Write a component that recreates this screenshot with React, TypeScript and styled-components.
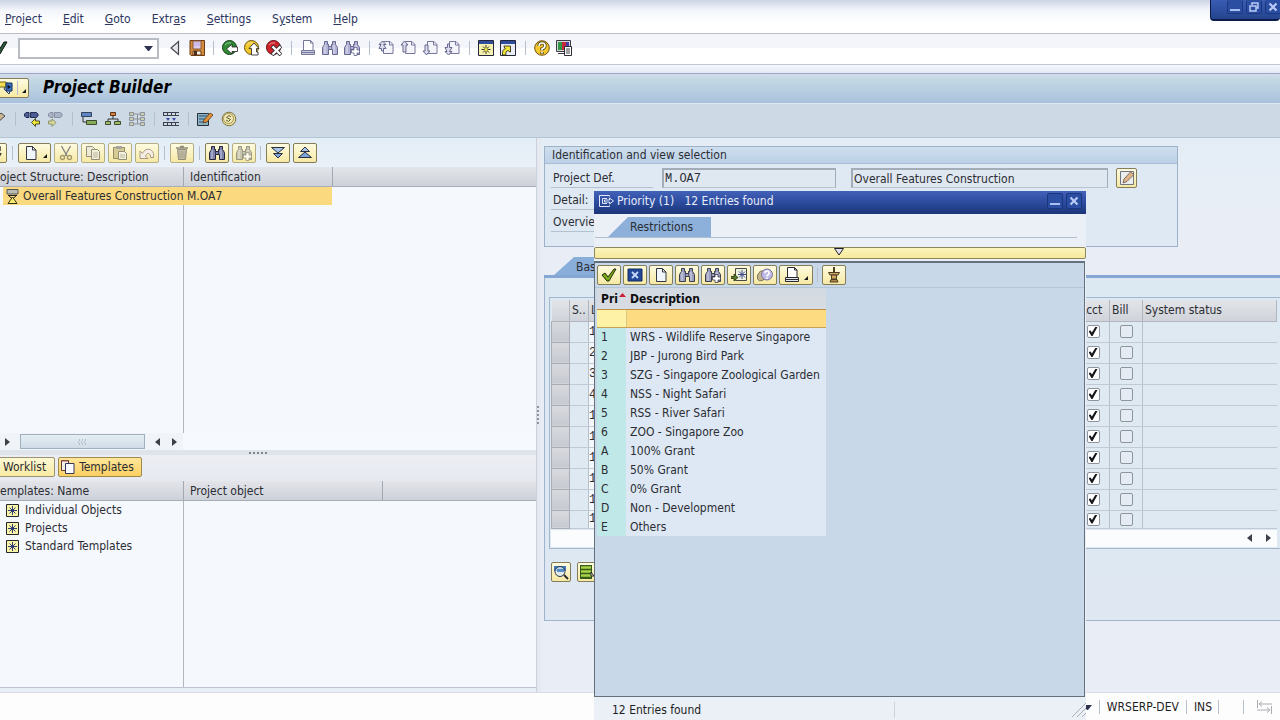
import React from 'react';
import styled, { createGlobalStyle, css } from 'styled-components';

const FONT = '"DejaVu Sans Condensed", "DejaVu Sans", "Noto Sans", sans-serif';

const Global = createGlobalStyle`
  *, *::before, *::after { box-sizing: border-box; }
  body {
    margin: 0;
    font: 12px/16px ${FONT};
    color: #2b2d33;
    background: #e9eef6;
    overflow: hidden;
  }
  button, input { font: inherit; color: inherit; margin: 0; }
  svg { flex: none; }
`;

/* ---------- frame ---------- */

const Window = styled.div`
  position: relative;
  display: flex;
  flex-direction: column;
  min-height: 100vh;
  overflow: hidden;
`;

const MenuBar = styled.nav`
  display: flex;
  justify-content: space-between;
  height: 34px;
  border-bottom: 1px solid #bcbcc2;
  background: linear-gradient(#ccd4e5, #f2f5fa 10px, #ffffff 22px);
`;

const MenuList = styled.ul`
  display: flex;
  gap: 21px;
  margin: 0;
  padding: 11px 0 0 5px;
  list-style: none;
`;

const MenuItem = styled.button`
  padding: 0;
  border: 0;
  background: none;
  color: #2c3560;
  line-height: 16px;
`;

const CornerControls = styled.div`
  display: flex;
  gap: 3px;
  width: 70px;
  height: 21px;
  padding: 0 0 0 16px;
  border-bottom: 2px solid #0c1c48;
  border-left: 1px solid #0c1c48;
  border-radius: 0 0 4px 4px;
  background: linear-gradient(#3a5cb2, #24448f);
  overflow: hidden;
`;

const WindowButton = styled.button<{ $boxed?: boolean }>`
  display: flex;
  flex: none;
  align-items: center;
  justify-content: center;
  width: 16px;
  height: ${(p) => (p.$boxed ? 16 : 14)}px;
  padding: 0;
  border: 1px solid #1a367e;
  border-top-color: ${(p) => (p.$boxed ? '#1a367e' : 'transparent')};
  border-radius: 2px;
  background: #2b4da2;
`;

const StandardBar = styled.div`
  height: 31px;
  padding-bottom: 2px;
  border-bottom: 1px solid #c3c7d4;
  background: linear-gradient(#f4f5fb 14px, #ffffff 14px);
`;

const BarGap = styled.div`
  height: 9px;
  border-bottom: 1px solid #9ea7c1;
  background: linear-gradient(#f6f8fd, #e3e9f5);
`;

const TitleBar = styled.header`
  display: flex;
  align-items: center;
  gap: 14px;
  height: 30px;
  padding-bottom: 1px;
  border-bottom: 1px solid #dde7f1;
  background: linear-gradient(#d3dcec, #c4d8e3 6px, #a9c1dd);
`;

const Title = styled.h1`
  margin: 0;
  padding-bottom: 2px;
  font: italic bold 17px/20px ${FONT};
  color: #000;
`;

const AppBar = styled.div`
  height: 34px;
  padding-bottom: 3px;
  border-bottom: 1px solid #b3c4d4;
  background: #cddae6;
`;

const Tools = styled.div<{ $gap: number; $cut?: number }>`
  display: flex;
  align-items: center;
  gap: ${(p) => p.$gap}px;
  height: 100%;
  margin-left: -${(p) => p.$cut ?? 0}px;
`;

const Divider = styled.span<{ $before?: number; $after?: number }>`
  flex: none;
  width: 1px;
  height: 14px;
  margin: 0 ${(p) => p.$after ?? 1}px 0 ${(p) => p.$before ?? 1}px;
  background: #b5bfce;
`;

const FlatButton = styled.button`
  display: flex;
  flex: none;
  width: 16px;
  height: 16px;
  padding: 0;
  border: 0;
  background: none;
`;

const GoldButton = styled.button<{ $w?: number; $faded?: boolean }>`
  display: flex;
  flex: none;
  align-items: center;
  justify-content: center;
  gap: 4px;
  width: ${(p) => (p.$w ? `${p.$w}px` : '24px')};
  height: 20px;
  padding: 0;
  border: 1px solid ${(p) => (p.$faded ? '#b5ad84' : '#857d58')};
  border-radius: 2px;
  background: linear-gradient(#fefbe0, #f6e9a4);
  svg { opacity: ${(p) => (p.$faded ? 0.75 : 1)}; }
`;

const CommandBox = styled.div`
  display: flex;
  align-items: center;
  width: 141px;
  height: 21px;
  margin: 0 2px 0 4px;
  border: 2px solid #b9bbc2;
  background: #fff;
`;

const CommandInput = styled.input`
  flex: 1;
  min-width: 0;
  height: 17px;
  border: 0;
  background: transparent;
`;

/* ---------- panes ---------- */

const Panes = styled.main`
  display: grid;
  grid-template-columns: 537px 4px minmax(0, 1fr);
  flex: 1;
`;

const LeftPane = styled.section`
  display: flex;
  flex-direction: column;
  min-width: 0;
  padding-bottom: 4px;
  overflow: hidden;
  border-right: 1px solid #c9d1dc;
  background: #e8eef6;
`;

const Splitter = styled.div`
  display: flex;
  align-items: center;
  justify-content: flex-start;
  background: #e6e9f0;
`;

const PaneTools = styled.div`
  height: 29px;
  background: linear-gradient(#e3eef6, #eaf0f8);
`;

const TreeHead = styled.div<{ $second: number }>`
  display: grid;
  grid-template-columns: 184px ${(p) => p.$second}px 1fr;
  flex: none;
  height: 20px;
  border-bottom: 1px solid #a9adb8;
  background: linear-gradient(#e3e5ea, #cdd1d9);
`;

const HeadCell = styled.div<{ $flush?: boolean }>`
  padding: 2px 0 0 ${(p) => (p.$flush ? 0 : 6)}px;
  border-right: 1px solid #a4a8b2;
  line-height: 17px;
  white-space: nowrap;
  &:last-child { border-right: 0; }
`;

const TreeBody = styled.div<{ $grow?: boolean }>`
  flex: ${(p) => (p.$grow ? '1' : '0 0 246px')};
  border-bottom: ${(p) => (p.$grow ? '1px solid #bcc4d0' : '0')};
  background: linear-gradient(#b1b6c0, #b1b6c0) 183px 0 / 1px 100% no-repeat #f5f8fd;
`;

const ProjectRow = styled.div`
  display: grid;
  grid-template-columns: 180px 149px;
  width: 329px;
  height: 18px;
  margin-left: 3px;
  background: #fad97f;
`;

const RowCell = styled.div<{ $first?: boolean }>`
  display: flex;
  align-items: center;
  gap: 4px;
  padding-left: ${(p) => (p.$first ? 3 : 4)}px;
  white-space: nowrap;
`;

const TemplateRow = styled.div`
  display: flex;
  align-items: center;
  gap: 6px;
  height: 18px;
  padding-left: 6px;
`;

const ScrollRow = styled.div`
  display: flex;
  flex: none;
  align-items: center;
  gap: 8px;
  width: 183px;
  height: 17px;
  padding-left: 3px;
  background: #f0f4f9;
`;

const ScrollStrip = styled.div`
  flex: none;
  background: #f6f9fd;
`;

const Thumb = styled.div`
  display: flex;
  align-items: center;
  justify-content: center;
  width: 125px;
  height: 15px;
  border: 1px solid #9fb0c0;
  background: linear-gradient(#e6eef4, #cfdce7);
`;

const ArrowButton = styled.button<{ $w?: number }>`
  display: flex;
  align-items: center;
  justify-content: center;
  width: ${(p) => p.$w ?? 9}px;
  height: 15px;
  padding: 0;
  border: 0;
  background: none;
`;

const HorizontalSplitter = styled.div`
  display: flex;
  flex: none;
  align-items: center;
  height: 5px;
  padding-left: 249px;
  background: #dfe3ea;
`;

const ModeBar = styled.div`
  display: flex;
  flex: none;
  align-items: center;
  gap: 3px;
  height: 26px;
  margin-left: -9px;
  padding-bottom: 2px;
  background: linear-gradient(#eceef4, #e6e9f0);
`;

const ModeButton = styled.button<{ $active?: boolean }>`
  display: flex;
  align-items: center;
  gap: 4px;
  height: 20px;
  padding: 0 ${(p) => (p.$active ? 7 : 8)}px 0 ${(p) => (p.$active ? 2 : 11)}px;
  border: 1px solid ${(p) => (p.$active ? '#a08a4a' : '#9a9270')};
  border-radius: 2px;
  background: ${(p) => (p.$active ? 'linear-gradient(#ffe79a, #fbcf62)' : 'linear-gradient(#fdf9d4, #f8eaa2)')};
`;

/* ---------- right pane ---------- */

const RightPane = styled.section`
  min-width: 0;
  padding: 8px 0 0 3px;
  background: linear-gradient(#e4edf6, #e9eef6 80px);
`;

const Group = styled.section`
  max-width: 634px;
  height: 101px;
  border: 1px solid #9db1c9;
  background: #dfe9f3;
`;

const GroupTitle = styled.h2`
  margin: 0 0 3px;
  padding-left: 7px;
  border-bottom: 1px solid #a8bdd6;
  background: linear-gradient(#cfdeed, #bcd1e7);
  font: 12px/16px ${FONT};
`;

const FieldRow = styled.div`
  display: flex;
  align-items: center;
  height: 22px;
  padding-left: 6px;
`;

const FieldLabel = styled.label`
  width: 102px;
  height: 20px;
  margin-right: 9px;
  padding-left: 2px;
  border-bottom: 1px solid #b3c1d0;
  line-height: 20px;
`;

const Field = styled.input<{ $w: number; $mono?: boolean }>`
  width: ${(p) => p.$w}px;
  height: 20px;
  margin-right: ${(p) => (p.$mono ? 15 : 8)}px;
  padding: 0 1px;
  border: 2px solid #a3adb8;
  border-right-width: 1px;
  border-bottom: 1px solid #b8c2cc;
  background: #dfe8f1;
  ${(p) => p.$mono && css`font: 12px/16px "Liberation Mono", monospace;`}
`;

const SlantTab = styled.button<{ $color: string }>`
  display: block;
  height: 100%;
  padding: 0 18px 0 22px;
  border: 0;
  clip-path: polygon(20px 0, 100% 0, 100% 100%, 0 100%);
  background: ${(p) => p.$color};
  line-height: 20px;
`;

const TabStrip = styled.div`
  height: 21px;
  margin-top: 10px;
  padding-left: 10px;
  border-bottom: 3px solid #86a7d3;
`;

const Panel = styled.div`
  height: 343px;
  padding: 19px 0 0 4px;
  border: 1px solid #9fb3cc;
  border-width: 0 0 1px 1px;
  background: linear-gradient(#dce9f3, #dfe8f2);
`;

const GridFrame = styled.div`
  height: 252px;
  padding: 2px 3px 0 1px;
  border: 1px solid #a5b7cc;
  border-width: 1px 0 1px 1px;
`;

const ActivityTable = styled.table`
  width: 100%;
  table-layout: fixed;
  border-collapse: collapse;
  th {
    height: 21px;
    padding: 0 2px;
    border-right: 1px solid #b0b5be;
    border-bottom: 1px solid #b0b5be;
    background: linear-gradient(#e2e4e8, #cfd3d9);
    font-weight: normal;
    text-align: left;
    white-space: nowrap;
  }
  td {
    height: 21px;
    padding: 0;
    border-right: 1px solid #b6c0cc;
    border-bottom: 1px solid #c0c9d4;
    background: #dfe9f2;
    font: 12px/16px "Liberation Mono", monospace;
  }
  td:last-child { border-right: 0; }
  tbody tr:last-child td { height: 18px; }
`;

const SelectorCell = styled.td`
  && {
    border: 1px solid #a9adb5;
    background: linear-gradient(#d8dadf, #c6c9d0);
  }
`;

const NumberCell = styled.td`
  && { background: #f4f7fb; }
`;

const Tick = styled.input`
  display: block;
  appearance: none;
  width: 13px;
  height: 13px;
  margin: 0 auto;
  border: 1px solid #8d949e;
  border-radius: 2px;
  background: #e4ebf2;
  &:checked { background: #fff; }
  &:checked::after {
    content: '';
    display: block;
    width: 9px;
    height: 9px;
    margin: 1px;
    background: #15171c;
    clip-path: polygon(0 45%, 22% 38%, 38% 62%, 75% 0, 100% 0, 45% 100%, 32% 100%);
  }
`;

const GridScroll = styled.div`
  display: flex;
  align-items: center;
  justify-content: flex-end;
  gap: 2px;
  height: 17px;
  margin-top: 1px;
  background: #fbfcfe;
`;

const PanelButtons = styled.div`
  display: flex;
  gap: 6px;
  padding: 13px 0 0 2px;
`;

const StatusBar = styled.footer`
  display: flex;
  align-items: center;
  justify-content: flex-end;
  gap: 6px;
  height: 28px;
  padding: 1px 7px 0 0;
  border-top: 1px solid #d9dde5;
  background: #fdfdfe;
  color: #1d1e22;
`;

/* ---------- search help window ---------- */

const Dialog = styled.section`
  position: absolute;
  top: 191px;
  bottom: 0;
  left: 594px;
  display: flex;
  flex-direction: column;
  width: 492px;
  background: #ebf0f7;
`;

const DialogTitle = styled.header`
  display: flex;
  align-items: center;
  gap: 3px;
  height: 23px;
  padding: 0 4px 3px 5px;
  background: linear-gradient(#4261b8, #2c4b9e 50%, #1b3578);
  color: #e6ecfa;
`;

const DialogName = styled.h2`
  flex: 1;
  margin: 0;
  font: 12px/16px ${FONT};
  white-space: pre;
`;

const DialogTabs = styled.div`
  height: 24px;
  margin: 0 9px 0 1px;
  padding: 3px 0 0 13px;
  border-bottom: 1px solid #b1bfd2;
`;

const GoldStrip = styled.button`
  display: flex;
  height: 12px;
  margin-top: 9px;
  padding: 0 0 0 239px;
  border: 1px solid #8c875f;
  border-radius: 2px;
  background: linear-gradient(#fcf5bc, #f7e89a);
`;

const DialogBody = styled.div`
  flex: 1;
  margin: 2px 1px 0 0;
  border: 1px solid #65707d;
  border-top-width: 2px;
  background: #c9d8e8;
`;

const DialogTools = styled.div`
  height: 25px;
  padding-left: 2px;
  border-bottom: 1px solid #b4c5d8;
`;

const HitList = styled.table`
  width: 229px;
  margin-left: 2px;
  table-layout: fixed;
  border-collapse: collapse;
  th {
    height: 21px;
    padding: 1px 0 0 4px;
    border-bottom: 1px solid #c08d45;
    background: linear-gradient(#d3dae2, #d8dce2);
    color: #0d0e10;
    text-align: left;
  }
  td {
    height: 19px;
    padding: 0 0 0 4px;
    background: #dde8f4;
    line-height: 18px;
    white-space: nowrap;
  }
  td:first-child { background: #c0e8e8; }
`;

const BlankRow = styled.tr`
  && td { background: #fddb80; height: 18px; border-bottom: 1px solid #c9a055; }
  && td:first-child { background: #fdf2a6; border-right: 1px solid #d9c987; }
`;

const SortHead = styled.th`
  svg { margin: 0 0 6px 1px; }
`;

const DialogStatus = styled.footer`
  display: flex;
  align-items: center;
  height: 23px;
  padding: 3px 0 0 18px;
  color: #1d1e22;
`;

const StatusDivider = styled.span`
  width: 1px;
  height: 16px;
  margin: 0 auto 0 193px;
  background: #cdd4de;
`;

/* ---------- icons ---------- */

const Svg = ({ w = 16, h = 16, children }: { w?: number; h?: number; children: React.ReactNode }) => (
  <svg width={w} height={h} viewBox={`0 0 ${w} ${h}`} fill="none" aria-hidden="true">{children}</svg>
);

const Check = () => (
  <Svg><path d="M1 8l3-2 3 4 6-8h2l-7 12H6z" fill="#7aa818" stroke="#222b0c" /></Svg>
);
const DarkCheck = () => (
  <Svg><path d="M1 8l3-2 3 4 5-8h3l-7 12H6z" fill="#2d5a3c" stroke="#10150f" /></Svg>
);
const Down = ({ color = '#2e3250' }) => (
  <Svg w={9} h={5}><path d="M0 0h9L5 5H4z" fill={color} /></Svg>
);
const TriLeft = () => (
  <Svg><path d="M11.500 1.500v13L4 8z" fill="#e5e7ea" stroke="#45474d" strokeWidth="1.200" /></Svg>
);
const ArrowLeft = () => (<Svg w={5} h={8}><path d="M5 0v8L0 4z" fill="#3d4048" /></Svg>);
const ArrowRight = () => (<Svg w={5} h={8}><path d="M0 0v8l5-4z" fill="#3d4048" /></Svg>);
const Save = () => (
  <Svg>
    <path d="M1 .5h14.500v15H2l-1-1z" fill="#d48a3c" stroke="#6b3c14" />
    <path d="M4 1h8v8H4z" fill="#dccdf0" stroke="#8a5a34" /><path d="M5 3h6M5 5h6" stroke="#c0a8e0" />
    <path d="M4 11h8v4H4z" fill="#f5f0e4" stroke="#6b3c14" /><path d="M5 11h3v4H5z" fill="#4a2c18" />
  </Svg>
);
const Round = ({ color, edge, children }: { color: string; edge: string; children: React.ReactNode }) => (
  <Svg><circle cx="7.500" cy="7.500" r="7" fill={color} stroke={edge} /><path d="M3 5q2-3 6-2" stroke="#fff" opacity=".5" />{children}</Svg>
);
const Back = () => (
  <Round color="#2f8a34" edge="#173c18"><path d="M4.500 9L10 4v3h5.500v4.500H10V14z" fill="#fff" stroke="#222" strokeWidth=".8" /></Round>
);
const Exit = () => (
  <Round color="#f0c82c" edge="#6d5410"><path d="M10 3l5 5.500h-2.500V12H14v3H7.500V8.500H5z" fill="#fff" stroke="#333" strokeWidth=".9" /></Round>
);
const Cancel = () => (
  <Round color="#d0242a" edge="#5c1013">
    <path d="M6 6l9 9M15 6l-9 9" stroke="#333" strokeWidth="4" /><path d="M6.500 6.500l8 8M14.500 6.500l-8 8" stroke="#fff" strokeWidth="2.400" />
  </Round>
);
const Printer = ({ edge = '#77779a', body = '#c9c9e2' }) => (
  <Svg>
    <path d="M3.500 10.500v-10h7l2.500 2.500v7.500z" fill="#fff" stroke={edge} /><path d="M10.500.5V3H13" stroke={edge} />
    <path d="M1.500 10.500h13v4h-13z" fill={body} stroke={edge} /><path d="M1 12.500h14" stroke={edge} />
  </Svg>
);
const Binoculars = ({ edge = '#66688f', fill = '#b4b5d6', plus = false, star = '#fff' }) => (
  <Svg>
    <path d="M2.500 1.500h3v3h1v2h3v-2h1v-3h3v3l2 3v7h-5v-5h-4v5h-6v-7l2-3z" fill={fill} stroke={edge} />
    <path d="M3 5v9M12 5v9" stroke="#fff" opacity=".6" /><path d="M6.500 4v6M9.500 4v6" stroke={edge} opacity=".7" />
    {plus && <path d="M10 7.500h3v2.500h2.500v3H13v2.500h-3V13H7.500v-3H10z" fill={star} stroke={edge} strokeWidth=".8" />}
  </Svg>
);
const PageNav = ({ kind }: { kind: 'first' | 'prev' | 'next' | 'last' }) => (
  <Svg>
    <path d="M5.500 1.500h6.500l3 3v9H5.500z" fill="#f4f4fb" stroke="#77779a" /><path d="M11.500 1.500v3.500H15" stroke="#77779a" />
    {kind === 'first' && <path d="M4.500 1L1 4.500h2L1 8.500h2.500V11h2V8.500H8L5.500 4.500H8z" fill="#dddcec" stroke="#66688f" />}
    {kind === 'prev' && <path d="M4.500 1L1 5h2v7h3V5h2z" fill="#dddcec" stroke="#66688f" />}
    {kind === 'next' && <path d="M4.500 15L1 11h2V5h3v6h2z" fill="#dddcec" stroke="#66688f" />}
    {kind === 'last' && <path d="M4.500 15L1 11.500h2L1 7.500h2.500V4h2v3.500H8L5.500 11.500H8z" fill="#dddcec" stroke="#66688f" />}
  </Svg>
);
const NewSession = () => (
  <Svg>
    <path d="M.5.5h15v15H.5z" fill="#f6f1b0" stroke="#23253a" /><path d="M1 1h14v3H1z" fill="#2f4d9c" />
    <path d="M8 5v9M3.500 9.500h9M5 6.500l6 6M11 6.500l-6 6" stroke="#34351a" /><circle cx="8" cy="9.500" r="1.500" fill="#f7ee3c" />
  </Svg>
);
const Shortcut = () => (
  <Svg>
    <path d="M.5.5h15v15H.5z" fill="#ececf4" stroke="#23253a" /><path d="M1 1h14v3H1z" fill="#2f4d9c" />
    <path d="M2.500 15c-.5-4 1-6 3-6.500L4 7V6h6.500v6H10L8 10.500C6 11 5.500 13 6 15z" fill="#f1e637" stroke="#34351a" strokeWidth=".9" />
  </Svg>
);
const Help = () => (
  <Svg>
    <circle cx="8" cy="8" r="7.300" fill="#f3c92f" stroke="#70520c" />
    <path d="M5 6q0-3 3-3t3 2.500-3 3.500v1.500M8 12v2" stroke="#3f3514" strokeWidth="3.200" /><path d="M5 6q0-3 3-3t3 2.500-3 3.500v1.500M8 12v1.500" stroke="#fff" strokeWidth="1.700" />
  </Svg>
);
const LayoutIcon = () => (
  <Svg>
    <path d="M.5.500h14v11H.5z" fill="#d7d7da" stroke="#3b3b48" /><path d="M2 2h4v8H2z" fill="#2f9746" /><path d="M6 2h4v8H6z" fill="#c9283a" /><path d="M10 2h3v8h-3z" fill="#4a38a5" />
    <path d="M2 13.500h6" stroke="#3b3b48" /><path d="M8.500 6.500h7v9h-7z" fill="#fff" stroke="#2b2b33" /><path d="M10 9h4M10 11h4M10 13h4" stroke="#444" />
  </Svg>
);
const Pencil = () => (
  <Svg><path d="M3 13l1-4 7-7 4 3-8 7z" fill="#c9b592" stroke="#4b4a4c" /><path d="M3 13l3-1-2-2z" fill="#222" /></Svg>
);
const Glasses = () => (
  <Svg>
    <path d="M7 9l3-6 5 2-3 9z" fill="#dfe9f6" stroke="#2c3c63" /><path d="M1 2h8v5H1z" fill="#f3df4f" stroke="#6c601c" />
    <path d="M9 3h6v8H9z" fill="#3b72c4" stroke="#18305c" /><path d="M10.500 4.500l3.500 2.500-3.500 2.500z" fill="#10182c" />
  </Svg>
);
const MoveObj = ({ forward = false }) => (
  <Svg>
    <path d="M2 1.500h3v5H2L.5 5V3zM6.500 1.500h6L14 3v2l-1.500 1.500h-6z" fill={forward ? '#aab3c6' : '#4b5c96'} stroke={forward ? '#8790a4' : '#252d52'} />
    {forward
      ? <path d="M8 11.500l-4-3.500v2H.500v3H4v2.500z" fill="#d8d99a" stroke="#8a8c62" strokeWidth=".9" />
      : <path d="M7.500 11.500l4-4V10h4v3h-4v2.500z" fill="#f2ea38" stroke="#3c3b16" strokeWidth=".9" />}
  </Svg>
);
const Bars = () => (
  <Svg><path d="M.5 1.500h10v4H.5z" fill="#5d86c2" stroke="#30435f" /><path d="M5.500 9.500h10v4h-10z" fill="#86a95a" stroke="#3d4a2c" /><path d="M2 6v5h3" stroke="#333" /></Svg>
);
const Hierarchy = () => (
  <Svg>
    <path d="M5.500 1.500h5v3h-5z" fill="#d98243" stroke="#5c3415" /><path d="M8 5v3M3 11V8h10v3" stroke="#333" />
    <path d="M.5 10.500h5v3h-5zM9.500 10.500h6v3h-6z" fill="#a3bd69" stroke="#3d4a2c" />
  </Svg>
);
const Network = () => (
  <Svg>
    <path d="M4 3h4.500v10H4M4 8h8M12 3H9M12 13H9" stroke="#8c9099" />
    <path d="M.5 1.500h4v3h-4zM.5 6.500h4v3h-4zM.5 11.500h4v3h-4zM11.500 1.500h4v3h-4zM11.500 6.500h4v3h-4zM11.500 11.500h4v3h-4z" fill="#cdd0ae" stroke="#8c9099" />
  </Svg>
);
const PlanBoard = () => (
  <Svg>
    <path d="M0 1.500h16M0 4.500h16M0 11.500h16M0 14.500h16" stroke="#3b3f4e" /><path d="M0 3h16M0 13h16" stroke="#3b3f4e" strokeWidth="2" strokeDasharray="1 3" />
    <path d="M3 7h4L5 10zM9 7h4l-2 3z" fill="#3e4aa6" />
  </Svg>
);
const NoteEdit = () => (
  <Svg>
    <path d="M.5 2.500h11v12H.5z" fill="#8fb3c6" stroke="#26303a" /><path d="M2 5h8M2 8h7M2 11h6" stroke="#28506a" />
    <path d="M6 12l1-3 6-7 3 2-6 7z" fill="#e0903a" stroke="#5e3a14" strokeWidth=".8" />
  </Svg>
);
const Coin = () => (
  <Svg>
    <circle cx="8" cy="8" r="6.800" fill="#eadf9a" stroke="#7f7648" /><circle cx="7.500" cy="7.500" r="5" fill="#f3ecba" stroke="#a29757" />
    <path d="M10 6L8 4.500 5.500 6.500 9.500 8.500 7.500 10.500 5 9" stroke="#5c5426" />
  </Svg>
);
const Blank = () => (
  <Svg><path d="M3.500 1.500h6l3.500 3.500v9.500H3.500z" fill="#f1f6fd" stroke="#34363e" /><path d="M9.500 1.500V5H13" stroke="#34363e" /></Svg>
);
const Corner = () => (<Svg w={4} h={14}><path d="M4 8v4H0z" fill="#17181c" /></Svg>);
const Cut = () => (
  <Svg>
    <path d="M3.500 1l5.500 10M12.500 1L7 11" stroke="#63656c" strokeWidth="1.400" /><circle cx="4.500" cy="12.500" r="2" stroke="#8b7f55" strokeWidth="1.400" /><circle cx="11.500" cy="12.500" r="2" stroke="#8b7f55" strokeWidth="1.400" />
  </Svg>
);
const Copy = () => (
  <Svg>
    <path d="M1.500 1.500h6l2 2v8h-8z" fill="#e9e7da" stroke="#716f62" /><path d="M6.500 4.500h6l2 2v8h-8z" fill="#f1efe0" stroke="#716f62" /><path d="M8 8h5M8 10h5M8 12h5" stroke="#a7a49a" />
  </Svg>
);
const Paste = () => (
  <Svg>
    <path d="M1.500 2.500h11v11h-11z" fill="#cdbf83" stroke="#716a46" /><path d="M4 1h6v3H4z" fill="#8b8b8b" /><path d="M6.500 6.500h6l2 2v6h-8z" fill="#f3f2ea" stroke="#716f62" /><path d="M8 10h5M8 12h5" stroke="#a7a49a" />
  </Svg>
);
const Undo = () => (
  <Svg><path d="M1 13.500V6l2.500 2.500C7 1 16 4 14.500 12.500h-3c0-4.500-3-5.500-5-1.500L9 13.500z" fill="#f3eeee" stroke="#8f7a76" /></Svg>
);
const Trash = () => (
  <Svg><path d="M3.500 4.500h9l-1 10h-7z" fill="#b5b1a6" stroke="#6f6b60" /><path d="M2 3h12M6 1.500h4" stroke="#6f6b60" strokeWidth="1.600" /><path d="M6 6v7M8 6v7M10 6v7" stroke="#86826f" /></Svg>
);
const Expand = () => (
  <Svg><path d="M1.500 2.500h13L8 8z" fill="#a8c6ec" stroke="#2a2e3c" /><path d="M3.500 8.500h9L8 13z" fill="#7aa6dd" stroke="#2a2e3c" /></Svg>
);
const Collapse = () => (
  <Svg><path d="M8 2l4.500 4.500h-9z" fill="#a8c6ec" stroke="#2a2e3c" /><path d="M8 7l6.500 5.500h-13z" fill="#7aa6dd" stroke="#2a2e3c" /></Svg>
);
const Refresh = () => (
  <Svg><path d="M8 2h5v4M13 6c-4-4-8-1-8 2M13 13H8V9m0 1c3 3 5 1 6-2" stroke="#3a3c34" strokeWidth="1.500" /></Svg>
);
const ProjectDef = () => (
  <Svg w={13} h={15}>
    <path d="M1 .5h11v4.500H1z" fill="#b9bcb6" stroke="#55564e" /><path d="M2 6.500h9M3 7l3.500 3L10 7" stroke="#222" />
    <path d="M6.500 8l4.500 6.500H2z" fill="#f6eb6a" stroke="#33321c" />
  </Svg>
);
const Spark = () => (
  <Svg w={13} h={13}>
    <path d="M.5.5h12v12H.5z" fill="#f8f4a8" stroke="#25262d" /><path d="M6.500 2v9M2 6.500h9M3.500 3.500l6 6M9.500 3.500l-6 6" stroke="#2f3a72" />
  </Svg>
);
const TemplatesIcon = () => (
  <Svg w={14}>
    <path d="M.5 1.500h7v10h-7z" fill="#f3eee8" stroke="#5a3a34" /><path d="M4.500 4.500h8.500v10H4.500z" fill="#fbfbff" stroke="#35375a" /><path d="M1 2h6" stroke="#b55a4a" />
  </Svg>
);
const Grip = () => (
  <Svg w={9} h={6}><path d="M1 1h1M4 1h1M7 1h1M0 3h1M3 3h1M6 3h1M1 5h1M4 5h1M7 5h1" stroke="#8d9aa8" /></Svg>
);
const DotsH = () => (<Svg w={19} h={2}><path d="M0 1h19" stroke="#7f858f" strokeWidth="2" strokeDasharray="2 2" /></Svg>);
const DotsV = () => (<Svg w={2} h={18}><path d="M1 0v18" stroke="#8f959f" strokeWidth="2" strokeDasharray="2 2" /></Svg>);
const EditPage = () => (
  <Svg>
    <path d="M1.500 1.500h13v13h-13z" fill="#eceef0" stroke="#71757c" /><path d="M4 13l1-4 6.500-7L15 4.500 8 11.500z" fill="#e0b48a" stroke="#6b5a48" strokeWidth=".8" />
  </Svg>
);
const Magnify = () => (
  <Svg>
    <path d="M1 2h12v5H1z" fill="#3c78c0" /><circle cx="7" cy="7.500" r="5" fill="#dcebf5" fillOpacity=".8" stroke="#2d3642" /><path d="M4 5h7v3H4z" fill="#3c78c0" opacity=".8" />
    <path d="M11 11l4 4" stroke="#2a2c33" strokeWidth="2" />
  </Svg>
);
const ListIcon = () => (
  <Svg><path d="M1 1h12v14H1z" fill="#355a18" /><path d="M2 3.500h10M2 7.500h10M2 11.500h10" stroke="#a9d24a" strokeWidth="2.500" /><path d="M12 8l3 4h-3z" fill="#fff" stroke="#222" /></Svg>
);
const WinMark = () => (
  <Svg w={15} h={12}><path d="M10.500 1.500V.5H.5v11h10v-1" stroke="#dfe7f8" /><path d="M8 3.500H3.500v5H8" stroke="#dfe7f8" /><path d="M5.500 5h5V3l4 3-4 3V7h-5z" stroke="#dfe7f8" /></Svg>
);
const Minimize = () => (<Svg w={10} h={10}><path d="M0 8h10" stroke="#a9c0f2" strokeWidth="2" /></Svg>);
const CloseX = () => (<Svg w={10} h={10}><path d="M1.500 1.500l7 7M8.500 1.500l-7 7" stroke="#b9ccf5" strokeWidth="2.200" /></Svg>);
const Restore = () => (<Svg w={10} h={10}><path d="M3 3V1h6v5H7M1 4h6v5H1z" stroke="#b9ccf5" strokeWidth="1.500" /></Svg>);
const BlueX = () => (
  <Svg><path d="M1 2h14v12H1z" fill="#23479a" stroke="#122a63" /><path d="M5 5l6 6M11 5l-6 6" stroke="#c6dbf6" strokeWidth="1.800" /></Svg>
);
const AddValue = () => (
  <Svg>
    <path d="M4.500 1.500h11v12h-11z" fill="#eef2e0" stroke="#47493f" /><path d="M11 3v9M7 7.500h8M8 4.500l6 6M14 4.500l-6 6" stroke="#3e4a8a" />
    <path d="M0 9.500h3V7l4 3.500L3 14v-2.500H0z" fill="#5a7c28" stroke="#26340f" strokeWidth=".8" />
  </Svg>
);
const PersonHelp = () => (
  <Svg>
    <path d="M.5 8l3-4 3 0v9l-4 1-2-2z" fill="#c4b48c" stroke="#85795c" /><circle cx="10" cy="7.500" r="5.500" fill="#bdb9e2" stroke="#77739e" />
    <path d="M8 6q0-2 2-2t2 2-2 2.500v1M10 10.500V12" stroke="#fff" strokeWidth="1.600" />
  </Svg>
);
const Pin = () => (
  <Svg>
    <path d="M8 0v5" stroke="#4b3d22" strokeWidth="2" /><path d="M2.500 5.500h11L12 8H4z" fill="#d3a664" stroke="#4b3d22" /><path d="M5.500 8h5v4h-5z" fill="#d3a664" stroke="#4b3d22" /><path d="M5 12.500h6l1 2.500H4z" fill="#b08448" stroke="#4b3d22" />
  </Svg>
);
const Funnel = () => (<Svg w={10} h={8}><path d="M.5.500h9L5 7z" fill="#e2e0ee" stroke="#1f2029" /></Svg>);
const SortMark = () => (<Svg w={7} h={4}><path d="M3.500 0L7 4H0z" fill="#cc1f37" /></Svg>);
const Overwrite = () => (
  <Svg w={17} h={14}><path d="M1.500 0v8M3 4h13M6 1.500L3 4l3 2.500M15.500 6v8M1 10h13M11 7.500l3 2.500-3 2.500" stroke="#a9abae" /></Svg>
);
const Resize = () => (<Svg w={14} h={14}><path d="M0 14L14 0M5 14l9-9M10 14l4-4" stroke="#a8aeb8" /></Svg>);

/* ---------- data ---------- */

const menus: [string, string, string][] = [
  ['', 'P', 'roject'], ['', 'E', 'dit'], ['', 'G', 'oto'], ['Extr', 'a', 's'],
  ['', 'S', 'ettings'], ['S', 'y', 'stem'], ['', 'H', 'elp'],
];

const hits: [string, string][] = [
  ['1', 'WRS - Wildlife Reserve Singapore'],
  ['2', 'JBP - Jurong Bird Park'],
  ['3', 'SZG - Singapore Zoological Garden'],
  ['4', 'NSS - Night Safari'],
  ['5', 'RSS - River Safari'],
  ['6', 'ZOO - Singapore Zoo'],
  ['A', '100% Grant'],
  ['B', '50% Grant'],
  ['C', '0% Grant'],
  ['D', 'Non - Development'],
  ['E', 'Others'],
];

const activities = ['1', '2', '3', '4', '1', '1', '1', '1', '1', '1'];
const templates = ['Individual Objects', 'Projects', 'Standard Templates'];

const flat = (label: string, icon: React.ReactNode) => (
  <FlatButton key={label} aria-label={label}>{icon}</FlatButton>
);
const gold = (label: string, icon: React.ReactNode, faded = false) => (
  <GoldButton key={label} aria-label={label} $faded={faded}>{icon}</GoldButton>
);

export default function App() {
  return (
    <Window>
      <Global />
      <MenuBar>
        <MenuList>
          {menus.map(([a, key, b]) => (
            <li key={a + key + b}><MenuItem>{a}<u>{key}</u>{b}</MenuItem></li>
          ))}
        </MenuList>
        <CornerControls>
          <WindowButton aria-label="Minimize"><Minimize /></WindowButton>
          <WindowButton aria-label="Restore"><Restore /></WindowButton>
          <WindowButton aria-label="Close"><CloseX /></WindowButton>
        </CornerControls>
      </MenuBar>

      <StandardBar>
        <Tools $gap={6} $cut={8}>
          {flat('Enter', <DarkCheck />)}
          <CommandBox>
            <CommandInput aria-label="Command" />
            <ArrowButton aria-label="Command history" $w={18}><Down /></ArrowButton>
          </CommandBox>
          {flat('Hide', <TriLeft />)}
          {flat('Save', <Save />)}
          <Divider $before={2} $after={2} />
          {flat('Back', <Back />)}
          {flat('Exit', <Exit />)}
          {flat('Cancel', <Cancel />)}
          <Divider $before={3} $after={2} />
          {flat('Print', <Printer />)}
          {flat('Find', <Binoculars />)}
          {flat('Find next', <Binoculars plus />)}
          <Divider $before={3} $after={2} />
          {flat('First page', <PageNav kind="first" />)}
          {flat('Previous page', <PageNav kind="prev" />)}
          {flat('Next page', <PageNav kind="next" />)}
          {flat('Last page', <PageNav kind="last" />)}
          <Divider $before={3} $after={2} />
          {flat('New session', <NewSession />)}
          {flat('Create shortcut', <Shortcut />)}
          <Divider $before={3} $after={2} />
          {flat('Help', <Help />)}
          {flat('Customize layout', <LayoutIcon />)}
        </Tools>
      </StandardBar>
      <BarGap />

      <TitleBar>
        <Tools $gap={0} $cut={6}>
          <GoldButton $w={35} aria-label="Services for object">
            <Glasses /><Divider $before={0} $after={0} /><Corner />
          </GoldButton>
        </Tools>
        <Title>Project Builder</Title>
      </TitleBar>

      <AppBar>
        <Tools $gap={8} $cut={10}>
          {flat('Change', <Pencil />)}
          <Divider $before={1} $after={0} />
          {flat('Previous object', <MoveObj />)}
          {flat('Next object', <MoveObj forward />)}
          <Divider $before={0} $after={0} />
          {flat('Planning board', <Bars />)}
          {flat('Hierarchy graphic', <Hierarchy />)}
          {flat('Network graphic', <Network />)}
          <Divider $before={1} $after={0} />
          {flat('Mass change', <PlanBoard />)}
          <Divider $before={1} $after={0} />
          {flat('Edit note', <NoteEdit />)}
          {flat('Costs', <Coin />)}
        </Tools>
      </AppBar>

      <Panes>
        <LeftPane>
          <PaneTools>
            <Tools $gap={3} $cut={17}>
              {gold('Refresh', <Refresh />)}
              <Divider $before={2} $after={2} />
              <GoldButton $w={33} aria-label="Create"><Blank /><Corner /></GoldButton>
              {gold('Cut', <Cut />, true)}
              {gold('Copy', <Copy />, true)}
              {gold('Paste', <Paste />, true)}
              {gold('Undo', <Undo />, true)}
              <Divider $before={2} $after={2} />
              {gold('Delete', <Trash />, true)}
              <Divider $before={2} $after={2} />
              {gold('Find in tree', <Binoculars edge="#26283a" fill="#7b80ad" />)}
              {gold('Find next in tree', <Binoculars edge="#77786e" fill="#b9b8a8" plus />, true)}
              <Divider $before={1} $after={2} />
              {gold('Expand', <Expand />)}
              {gold('Collapse', <Collapse />)}
            </Tools>
          </PaneTools>
          <TreeHead $second={149}>
            <HeadCell $flush>oject Structure: Description</HeadCell>
            <HeadCell>Identification</HeadCell>
            <HeadCell />
          </TreeHead>
          <TreeBody>
            <ProjectRow>
              <RowCell $first><ProjectDef />Overall Features Construction</RowCell>
              <RowCell>M.OA7</RowCell>
            </ProjectRow>
          </TreeBody>
          <ScrollStrip>
            <ScrollRow>
              <ArrowButton aria-label="Scroll right"><ArrowRight /></ArrowButton>
              <Thumb><Grip /></Thumb>
              <ArrowButton aria-label="Scroll left"><ArrowLeft /></ArrowButton>
              <ArrowButton aria-label="Scroll to end"><ArrowRight /></ArrowButton>
            </ScrollRow>
          </ScrollStrip>
          <HorizontalSplitter><DotsH /></HorizontalSplitter>
          <ModeBar>
            <ModeButton>Worklist</ModeButton>
            <ModeButton $active><TemplatesIcon />Templates</ModeButton>
          </ModeBar>
          <TreeHead $second={199}>
            <HeadCell $flush>emplates: Name</HeadCell>
            <HeadCell>Project object</HeadCell>
            <HeadCell />
          </TreeHead>
          <TreeBody $grow>
            {templates.map((name) => (
              <TemplateRow key={name}><Spark />{name}</TemplateRow>
            ))}
          </TreeBody>
        </LeftPane>

        <Splitter><DotsV /></Splitter>

        <RightPane>
          <Group>
            <GroupTitle>Identification and view selection</GroupTitle>
            <FieldRow>
              <FieldLabel htmlFor="project-def">Project Def.</FieldLabel>
              <Field id="project-def" $w={174} $mono readOnly value="M.OA7" />
              <Field aria-label="Project description" $w={257} readOnly value="Overall Features Construction" />
              <GoldButton $w={21} aria-label="Edit long text"><EditPage /></GoldButton>
            </FieldRow>
            <FieldRow><FieldLabel as="span">Detail:</FieldLabel></FieldRow>
            <FieldRow><FieldLabel as="span">Overview</FieldLabel></FieldRow>
          </Group>
          <TabStrip><SlantTab $color="#8aaeda">Basic Data</SlantTab></TabStrip>
          <Panel>
            <GridFrame>
              <ActivityTable>
                <colgroup>
                  <col width="18" /><col width="19" /><col />
                  <col width="33" /><col width="33" /><col width="134" />
                </colgroup>
                <thead>
                  <tr><th /><th>S..</th><th>L</th><th>Acct</th><th>Bill</th><th>System status</th></tr>
                </thead>
                <tbody>
                  {activities.map((n, i) => (
                    <tr key={i}>
                      <SelectorCell />
                      <td />
                      <NumberCell>{n}</NumberCell>
                      <td><Tick type="checkbox" defaultChecked aria-label="Account assignment" /></td>
                      <td><Tick type="checkbox" aria-label="Billing" /></td>
                      <td />
                    </tr>
                  ))}
                </tbody>
              </ActivityTable>
              <GridScroll>
                <ArrowButton $w={17} aria-label="Scroll table left"><ArrowLeft /></ArrowButton>
                <ArrowButton $w={17} aria-label="Scroll table right"><ArrowRight /></ArrowButton>
              </GridScroll>
            </GridFrame>
            <PanelButtons>
              <GoldButton $w={20} aria-label="Details"><Magnify /></GoldButton>
              <GoldButton $w={20} aria-label="Select all"><ListIcon /></GoldButton>
            </PanelButtons>
          </Panel>
        </RightPane>
      </Panes>

      <StatusBar>
        <Down />
        <Divider />
        <span>WRSERP-DEV</span>
        <Divider />
        <span>INS</span>
        <Divider $before={0} $after={18} />
        <Divider $before={0} $after={6} />
        <Overwrite />
      </StatusBar>

      <Dialog role="dialog" aria-label="Priority">
        <DialogTitle>
          <WinMark />
          <DialogName>{'Priority (1)   12 Entries found'}</DialogName>
          <WindowButton $boxed aria-label="Minimize window"><Minimize /></WindowButton>
          <WindowButton $boxed aria-label="Close window"><CloseX /></WindowButton>
        </DialogTitle>
        <DialogTabs><SlantTab $color="#8cb0da">Restrictions</SlantTab></DialogTabs>
        <GoldStrip aria-label="Show restrictions"><Funnel /></GoldStrip>
        <DialogBody>
          <DialogTools>
            <Tools $gap={2}>
              {gold('Copy value', <Check />)}
              {gold('Close list', <BlueX />)}
              {gold('New selection', <Blank />)}
              {gold('Find value', <Binoculars edge="#3c3e4c" fill="#9c9fc0" />)}
              {gold('Find next value', <Binoculars edge="#3c3e4c" fill="#9c9fc0" plus />)}
              {gold('Insert in personal list', <AddValue />)}
              {gold('Personal value list', <PersonHelp />)}
              <GoldButton $w={34} aria-label="Print list">
                <Printer edge="#2a2b33" body="#e2e4f0" /><Corner />
              </GoldButton>
              <Divider $before={2} $after={2} />
              {gold('Hold list', <Pin />)}
            </Tools>
          </DialogTools>
          <HitList>
            <colgroup><col width="29" /><col /></colgroup>
            <thead><tr><SortHead>Pri<SortMark /></SortHead><th>Description</th></tr></thead>
            <tbody>
              <BlankRow><td /><td /></BlankRow>
              {hits.map(([code, text]) => (
                <tr key={code}><td>{code}</td><td>{text}</td></tr>
              ))}
            </tbody>
          </HitList>
        </DialogBody>
        <DialogStatus>
          <span>12 Entries found</span>
          <StatusDivider />
          <Resize />
        </DialogStatus>
      </Dialog>
    </Window>
  );
}
